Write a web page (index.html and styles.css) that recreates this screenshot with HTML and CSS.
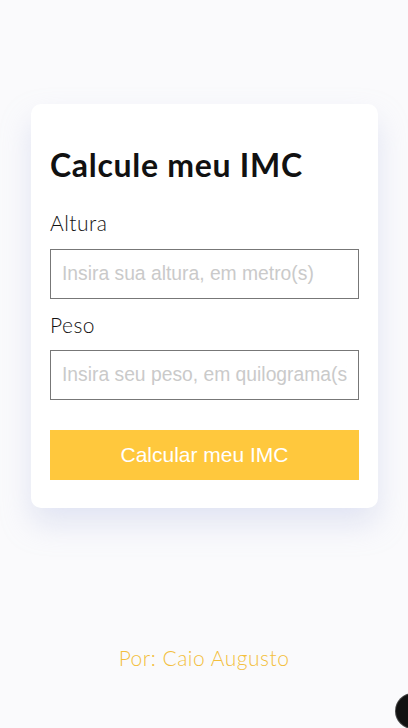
FILE: index.html
```html
<!DOCTYPE html>
<html lang="pt-BR">
<head>
  <meta charset="UTF-8" />
  <meta name="viewport" content="width=device-width, initial-scale=1.0"/>
  <title>Calculadora de IMC</title>
  <link rel="stylesheet" href="styles.css">
</head>
<body>
  <main class="container">
    <form class="card">
      <h1>Calcule meu IMC</h1>

      <label for="altura">Altura</label>
      <input id="altura" type="text" placeholder="Insira sua altura, em metro(s)" />

      <label for="peso">Peso</label>
      <input id="peso" type="text" placeholder="Insira seu peso, em quilograma(s)" />

      <button type="button">Calcular meu IMC</button>
    </form>
  </main>

  <footer class="footer">Por: Caio Augusto</footer>

  <div class="chat-bubble"></div>
</body>
</html>
```

FILE: styles.css
```css
body {
  font-family: "Lato", "Open Sans", sans-serif;
  background: #fafafc;
  margin: 0;
  padding: 0;
  min-height: 728px;
  overflow: hidden;
}
.container {
  padding: 104px 30px 0 31px;
}
.card {
  background: white;
  border-radius: 10px;
  padding: 42px 19px 28px;
  box-shadow: 0 16px 30px rgba(180, 188, 225, 0.35);
  display: flex;
  flex-direction: column;
}
.card h1 {
  margin: 0 0 26px;
  font-size: 32px;
  line-height: 38px;
  letter-spacing: 0.7px;
  font-weight: 700;
  color: #111;
}
.card label {
  font-size: 21px;
  line-height: 25px;
  letter-spacing: 0.5px;
  font-weight: 300;
  color: #111;
  margin-bottom: 13.5px;
}
.card input {
  height: 50px;
  box-sizing: border-box;
  border: 1px solid #777;
  padding: 0 11px;
  font-family: "Liberation Sans", Arial, sans-serif;
  font-size: 19.3px;
  margin-bottom: 13px;
}
.card input::placeholder {
  color: #cacaca;
}
.card button {
  margin-top: 17px;
  height: 50px;
  border: none;
  background: #ffc83d;
  color: white;
  font-family: "Liberation Sans", Arial, sans-serif;
  font-size: 21px;
  cursor: pointer;
}
.footer {
  margin-top: 137px;
  text-align: center;
  font-size: 21px;
  letter-spacing: 0.5px;
  font-weight: 300;
  color: #f3bf3c;
}
.chat-bubble {
  position: fixed;
  left: 396px;
  top: 694px;
  width: 34px;
  height: 34px;
  border-radius: 50%;
  background: #111;
  box-shadow: 0 0 0 1px #444;
}
```
